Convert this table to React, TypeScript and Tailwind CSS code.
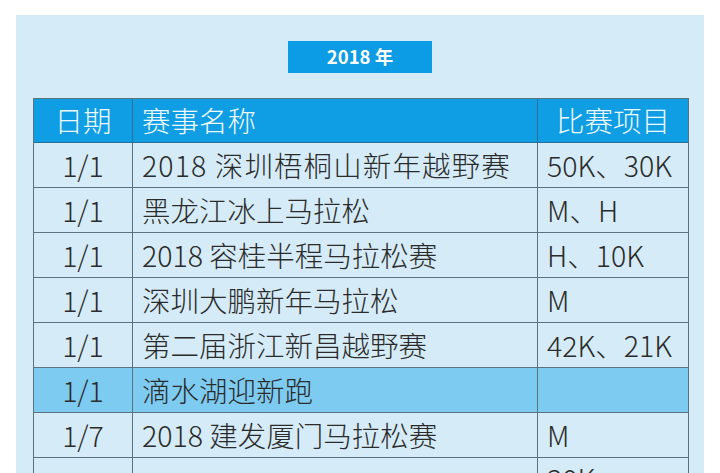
import React from "react";

const rows: { d: string; n: string; i: string; hl?: boolean; tall?: boolean; wide?: boolean }[] = [
  { d: "1/1", n: "2018 深圳梧桐山新年越野赛", i: "50K、30K", wide: true },
  { d: "1/1", n: "黑龙江冰上马拉松", i: "M、H" },
  { d: "1/1", n: "2018 容桂半程马拉松赛", i: "H、10K" },
  { d: "1/1", n: "深圳大鹏新年马拉松", i: "M" },
  { d: "1/1", n: "第二届浙江新昌越野赛", i: "42K、21K" },
  { d: "1/1", n: "滴水湖迎新跑", i: "", hl: true },
  { d: "1/7", n: "2018 建发厦门马拉松赛", i: "M" },
  { d: "1/7", n: "2018 长沙跑步节", i: "30K、10K、5K", tall: true },
];

const font = { fontFamily: '"Noto Sans CJK SC", "Noto Sans", sans-serif' };

export default function App() {
  return (
    <div className="w-[720px] h-[473px] overflow-hidden bg-white" style={font}>
      <div className="ml-[16px] mt-[15px] w-[688px] h-[640px] bg-[#d5ebf7] pt-[26px]">
        <div className="mx-auto w-[144px] h-[32px] bg-[#0b9ce5] flex items-center justify-center text-white text-[18.5px] font-bold">
          2018 年
        </div>
        <div className="ml-[17px] mt-[25px] w-[656px] border border-[#5d7181]">
          <div className="flex h-[44px] bg-[#0f9ee3] border-b border-[#2b6f98] text-[#eef8ff] text-[28.5px] font-light">
            <div className="w-[99px] border-r border-[#2b6f98] flex items-center justify-center">日期</div>
            <div className="w-[405px] border-r border-[#2b6f98] flex items-center pl-[9px]">赛事名称</div>
            <div className="flex-1 flex items-center justify-center">比赛项目</div>
          </div>
          {rows.map((r, k) => (
            <div
              key={k}
              className={`flex border-b border-[#5d7181] text-[28.5px] font-light text-[#2b2b2b] ${r.tall ? "h-[135px]" : "h-[45px]"} ${r.hl ? "bg-[#7ecbf1]" : ""}`}
            >
              <div className="w-[99px] border-r border-[#5d7181] flex items-center justify-center">{r.d}</div>
              <div className={`w-[405px] border-r border-[#5d7181] flex items-center pl-[9px] whitespace-nowrap ${r.wide ? "tracking-[1.1px]" : ""}`}>{r.n}</div>
              {r.tall ? (
                <div className="flex-1 flex items-start pl-[9px] pt-0 leading-[40px]">
                  <div>
                    30K、
                    <br />
                    10K、
                    <br />
                    5K
                  </div>
                </div>
              ) : (
                <div className="flex-1 flex items-center pl-[9px] whitespace-nowrap">{r.i}</div>
              )}
            </div>
          ))}
        </div>
      </div>
    </div>
  );
}
